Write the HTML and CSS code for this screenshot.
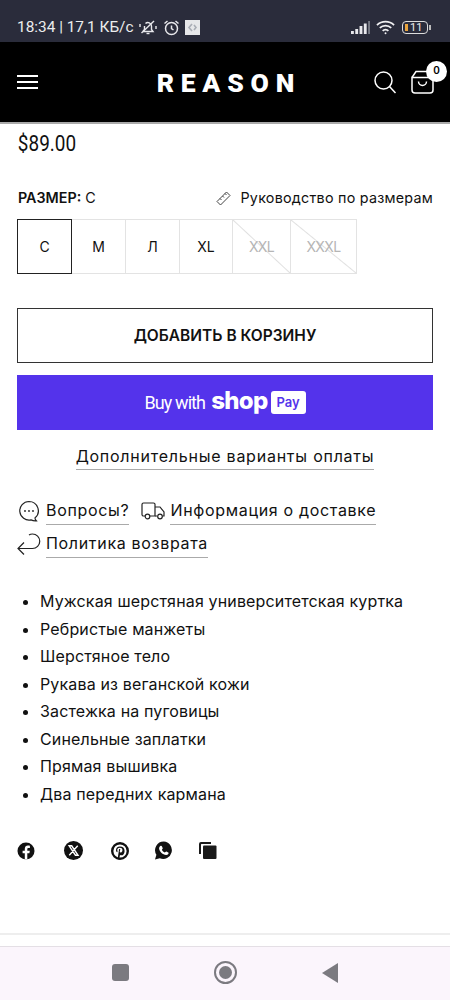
FILE: index.html
```html
<!DOCTYPE html>
<html lang="ru">

<head>
<title>Reason</title>
<meta charset="UTF-8">
<meta name="viewport" content="width=device-width, initial-scale=1.0">
<link rel="stylesheet" href="styles.css">
</head>

<body>
<div class="status-bar">
    <div class="status-left">
        <span>18:34 | 17,1 КБ/с</span>
        <svg class="st-icon" width="18" height="18" viewBox="0 0 18 18" fill="none" stroke="#e8e8ec" stroke-width="1.4"><path d="M4 13.5h10l-1.5-2V8a3.5 3.500 0 0 0-6-2.400"/><path d="M5.500 8v3.500L4 13.500"/><path d="M7.500 15.500h3"/><path d="M2.500 15L15 3"/><path d="M1 6v3M17 8v3"/></svg>
        <svg class="st-icon" width="17" height="17" viewBox="0 0 17 17" fill="none" stroke="#e8e8ec" stroke-width="1.500"><circle cx="8.500" cy="9.500" r="6"/><path d="M8.500 6.500v3l2 1.500"/><path d="M1.500 4.500l3-2.500M15.500 4.500l-3-2.500"/></svg>
        <span class="st-app"><svg width="15" height="15" viewBox="0 0 15 15" fill="none" stroke="#a9adb5" stroke-width="1.600"><path d="M7 4L4 7.500 7 11"/><path d="M9 5l2 2.500L9 10"/></svg></span>
    </div>
    <div class="status-right">
        <svg width="19" height="13" viewBox="0 0 20 13" fill="#e8e8ec" preserveAspectRatio="none"><rect x="0" y="10" width="3" height="3"/><rect x="4.500" y="8" width="3" height="5"/><rect x="9" y="5" width="3" height="8"/><rect x="13.500" y="2.500" width="3" height="10.500"/><rect x="18" y="0" width="2" height="13" fill="#777a85"/></svg>
        <svg width="20" height="15" viewBox="0 0 21 15" fill="none" stroke="#f0f0f2" stroke-width="1.800"><path d="M1 5a13 13 0 0 1 18 0"/><path d="M4 8a8.500 8.500 0 0 1 12 0"/><path d="M7 11a4 4 0 0 1 6 0"/><circle cx="10" cy="13.500" r="1" fill="#f0f0f2" stroke="none"/></svg>
        <div class="battery"><span class="battery-fill"></span><span class="battery-num">11</span></div>
    </div>
</div>

<header class="site-header">
    <div class="burger"><span></span><span></span><span></span></div>
    <div class="logo">REASON</div>
    <div class="header-icons">
        <svg width="24" height="24" viewBox="0 0 24 24" fill="none" stroke="#fff" stroke-width="1.500"><circle cx="10.500" cy="10.500" r="8.500"/><path d="M16.500 16.500l6 6.500"/></svg>
        <div class="cart">
            <svg width="23" height="24" viewBox="0 0 23 24" fill="none" stroke="#fff" stroke-width="1.500"><path d="M1 7.500h21V20a3 3 0 0 1-3 3H4a3 3 0 0 1-3-3z"/><path d="M1 7.500L5 1.500h13l4 6"/><path d="M7.500 11.500a4 4 0 0 0 8 0"/></svg>
            <span class="cart-count">0</span>
        </div>
    </div>
</header>

<main class="product">
    <div class="price">$89.00</div>

    <div class="size-head">
        <div><b>РАЗМЕР:</b> С</div>
        <div class="size-guide">
            <svg width="15" height="15" viewBox="0 0 15 15" fill="none" stroke="#444" stroke-width="1"><path d="M1 10.500L10.500 1 14 4.500 4.500 14z"/><path d="M4 7.500l1.500 1.500M6.500 5l1.500 1.500M9 2.500l1.500 1.500"/></svg>
            <span>Руководство по размерам</span>
        </div>
    </div>

    <div class="sizes">
        <div class="size active">С</div>
        <div class="size">М</div>
        <div class="size">Л</div>
        <div class="size xl">XL</div>
        <div class="size sold xxl">XXL</div>
        <div class="size sold xxxl">XXXL</div>
    </div>

    <button class="add-cart">ДОБАВИТЬ В КОРЗИНУ</button>
    <div class="shop-pay">
        <span class="buy-with">Buy with</span>
        <span class="shop-word">shop</span>
        <span class="pay-tag">Pay</span>
    </div>
    <div class="more-pay"><a>Дополнительные варианты оплаты</a></div>

    <div class="links">
        <div class="link-row">
            <svg class="link-icon" width="22" height="22" viewBox="0 0 22 22" fill="none" stroke="#222" stroke-width="1.200"><path d="M11 1.500a9.300 9.300 0 0 1 6 16.400c0 1 .5 2 1.500 3-2 .2-4-.2-5.500-1a9.300 9.300 0 1 1-2-18.400z"/><circle cx="7" cy="11" r=".9" fill="#222" stroke="none"/><circle cx="11" cy="11" r=".9" fill="#222" stroke="none"/><circle cx="15" cy="11" r=".9" fill="#222" stroke="none"/></svg>
            <a>Вопросы?</a>
            <svg class="link-icon truck" width="24" height="18" viewBox="0 0 24 18" fill="none" stroke="#222" stroke-width="1.200"><path d="M4 14H2.500A1.500 1.500 0 0 1 1 12.500V2.500A1.500 1.500 0 0 1 2.500 1h10A1.500 1.500 0 0 1 14 2.500V14H9"/><path d="M14 5h5l4 5v4h-1.500M16 14h-2"/><circle cx="6.500" cy="14.500" r="2.300"/><circle cx="19" cy="14.500" r="2.300"/></svg>
            <a>Информация о доставке</a>
        </div>
        <div class="link-row">
            <svg class="link-icon back" width="24" height="24" viewBox="0 0 24 24" fill="none" stroke="#222" stroke-width="1.200"><path d="M1 16.500h14.500a6.500 6.500 0 0 0 0-14.500c-1.500 0-2.500.3-3.500 1"/><path d="M7 10.500l-6 6 6 6"/></svg>
            <a>Политика возврата</a>
        </div>
    </div>

    <ul class="features">
        <li>Мужская шерстяная университетская куртка</li>
        <li>Ребристые манжеты</li>
        <li>Шерстяное тело</li>
        <li>Рукава из веганской кожи</li>
        <li>Застежка на пуговицы</li>
        <li>Синельные заплатки</li>
        <li>Прямая вышивка</li>
        <li>Два передних кармана</li>
    </ul>

    <div class="share">
        <svg width="18" height="18" viewBox="0 0 18 18"><circle cx="9" cy="9" r="8.500" fill="#111"/><path d="M10.300 17.500v-6.300h2.100l.4-2.500h-2.500V7.200c0-.8.3-1.300 1.400-1.300h1.200V3.700c-.5-.1-1.200-.2-1.900-.2-2 0-3.200 1.200-3.200 3.300v1.900H5.600v2.500h2.200v6.300z" fill="#fff"/></svg>
        <svg width="19" height="19" viewBox="0 0 18 18"><circle cx="9" cy="9" r="9" fill="#111"/><path d="M4.800 4.500h2.500l6 9h-2.500zM13 4.500L5 13.500" fill="none" stroke="#fff" stroke-width="1.300"/></svg>
        <svg width="18" height="18" viewBox="0 0 18 18"><circle cx="9" cy="9" r="7.800" fill="none" stroke="#111" stroke-width="2.400"/><path d="M9 4.500c-2.600 0-4 1.700-4 3.500 0 1 .5 2 1.300 2.300.3-.6.3-.9.200-1.300-.8-1.600.3-3.200 2.300-3.200 2 0 2.900 1.300 2.600 3-.3 1.700-2.100 2.300-2.700 1.300l.6-3H8.100L6.600 17l1.400.5 1-4.400c2.500 1 4.600-1 4.600-4.200C13.600 6 11.600 4.500 9 4.500z" fill="#111"/></svg>
        <svg width="19" height="19" viewBox="0 0 19 19"><path d="M9.800.5a8.700 8.700 0 0 0-7.400 13.300L1 18.500l4.800-1.300A8.700 8.700 0 1 0 9.800.5z" fill="#111"/><path d="M6.700 4.800c1.200-.5 1.700 1.700 2 2.400.2.500-.8 1.200-.8 1.500.6 1.300 1.600 2.200 2.900 2.800.4 0 1-1 1.500-.9.700.3 2.300 1 2.300 1.500 0 1.300-1.300 2-2.500 1.900-3.500-.4-6.300-3-7-6.200-.2-1.100.6-2.500 1.600-3z" fill="#fff"/></svg>
        <svg width="18" height="17" viewBox="0 0 18 17" fill="#1a1a1a"><path d="M2 0h10v2H2.500a.5.500 0 0 0-.5.500V12H0V2a2 2 0 0 1 2-2z"/><rect x="4" y="3.500" width="13.500" height="13.500" rx="1"/></svg>
    </div>
</main>

<div class="footer-rule"></div>

<nav class="nav-bar">
    <span class="nav-square"></span>
    <span class="nav-circle"><span></span></span>
    <svg width="16" height="20" viewBox="0 0 16 20"><path d="M16 0v20L0 10z" fill="#7b7a80"/></svg>
</nav>
</body>
</html>
```

FILE: styles.css
```css
* {
    box-sizing: border-box;
}
html, body {
    margin: 0;
    height: 1000px;
    overflow: hidden;
}
body {
    display: flex;
    flex-direction: column;
    font-family: Inter, "Noto Sans", sans-serif;
    font-size: 16px;
    color: #111;
    background: #fff;
}
a {
    color: inherit;
    border-bottom: 1px solid #aaa;
}

/* status bar */
.status-bar {
    height: 42px;
    padding: 10px 20px 0 17px;
    display: flex;
    justify-content: space-between;
    background: #2a2c3b;
    color: #eceded;
    font-family: Roboto, sans-serif;
    font-size: 15.400px;
}
.status-left, .status-right {
    display: flex;
    align-items: center;
    height: 34px;
}
.status-left > span:first-child {
    margin-right: 5px;
}
.st-icon {
    margin-right: 6px;
}
.st-app {
    width: 15px;
    height: 15px;
    margin-left: -1px;
    background: #e6e7e9;
    display: block;
    line-height: 0;
}
.status-right {
    gap: 6px;
}
.battery {
    position: relative;
    width: 26px;
    height: 13px;
    border: 1px solid #dcdcdc;
    border-radius: 4px;
    margin-right: 2px;
}
.battery:after {
    content: "";
    position: absolute;
    right: -4px;
    top: 3px;
    width: 2px;
    height: 5px;
    background: #bbb;
}
.battery-fill {
    position: absolute;
    left: 2px;
    top: 2px;
    width: 3px;
    height: 7px;
    background: #e8a33c;
}
.battery-num {
    position: absolute;
    left: 7px;
    top: -1px;
    font-size: 11px;
    line-height: 13px;
}

/* header */
.site-header {
    height: 82px;
    background: #000;
    border-bottom: 2px solid #aaa;
    display: grid;
    grid-template-columns: 1fr auto 1fr;
    align-items: center;
    padding: 0 16px 0 17px;
}
.burger {
    display: flex;
    flex-direction: column;
    gap: 4px;
    width: 21px;
}
.burger span {
    height: 2px;
    background: #fff;
}
.logo {
    color: #fff;
    font-family: Roboto, sans-serif;
    font-weight: 900;
    font-size: 26.500px;
    letter-spacing: 6.800px;
    margin-right: -6.800px;
}
.header-icons {
    justify-self: end;
    display: flex;
    align-items: center;
    gap: 14px;
}
.cart {
    position: relative;
    line-height: 0;
}
.cart-count {
    position: absolute;
    top: -9px;
    right: -13px;
    width: 21px;
    height: 21px;
    border-radius: 50%;
    background: #fff;
    color: #000;
    font-size: 10px;
    font-weight: 600;
    line-height: 19px;
    text-align: center;
}

/* product */
.product {
    flex: 1;
    padding: 0 17px;
}
.price {
    margin-top: 6px;
    font-family: Roboto, sans-serif;
    font-size: 22px;
    line-height: 28px;
    transform: scaleX(.86);
    transform-origin: left;
    padding-left: 1px;
}
.size-head {
    margin-top: 29px;
    display: flex;
    justify-content: space-between;
    align-items: center;
    font-size: 14.300px;
    line-height: 22px;
    padding-left: 1px;
}
.size-head b {
    font-weight: 600;
}
.size-guide {
    display: flex;
    align-items: center;
    gap: 9px;
    letter-spacing: .25px;
}
.sizes {
    margin-top: 10px;
    display: flex;
}
.size {
    width: 55px;
    height: 55px;
    margin-right: -1px;
    border: 1px solid #e3e3e3;
    display: flex;
    align-items: center;
    justify-content: center;
    font-size: 14px;
}
.size.active {
    position: relative;
    z-index: 1;
    border: 1px solid #222;
}
.size.sold {
    color: #b5b5b5;
    letter-spacing: -.6px;
    background: linear-gradient(to bottom left, transparent calc(50% - 1px), #e0e0e0 50%, transparent calc(50% + 1px));
}
.size.xl {
    width: 54px;
}
.size.xxl {
    width: 59px;
}
.size.xxxl {
    width: 67px;
}
.add-cart {
    display: block;
    width: 100%;
    height: 55px;
    margin-top: 34px;
    background: #fff;
    border: 1px solid #333;
    font-family: inherit;
    font-size: 15.500px;
    font-weight: 600;
    color: #111;
}
.shop-pay {
    height: 55px;
    margin-top: 12px;
    background: #5433eb;
    color: #fff;
    display: flex;
    align-items: center;
    justify-content: center;
}
.buy-with {
    font-family: Roboto, sans-serif;
    font-size: 18px;
    letter-spacing: -.9px;
    margin-right: 6px;
}
.shop-word {
    font-family: Inter, sans-serif;
    font-weight: 800;
    font-size: 24px;
    letter-spacing: -.7px;
    line-height: 30px;
    margin-right: 3px;
    margin-top: -4px;
}
.pay-tag {
    width: 35px;
    height: 23px;
    border-radius: 3px;
    background: #fff;
    color: #5433eb;
    font-size: 13px;
    font-weight: 600;
    text-align: center;
    line-height: 23px;
}
.more-pay {
    margin-top: 14px;
    text-align: center;
    font-size: 16px;
    line-height: 24px;
    letter-spacing: .76px;
}
.more-pay a {
    display: inline-block;
    padding-bottom: 1px;
}
.links {
    margin-top: 24px;
    font-size: 16px;
    letter-spacing: .68px;
}
.link-row {
    display: flex;
    align-items: center;
    height: 33px;
    padding-left: 1px;
}
.link-row a {
    line-height: 22px;
    padding-bottom: 3px;
    margin-top: 3px;
}
.link-icon {
    margin-right: 6px;
}
.truck {
    margin-left: 12px;
    margin-right: 5px;
}
.back {
    margin-left: -1px;
    margin-right: 5px;
}
.features {
    margin: 28px 0 0;
    padding: 0 0 0 23px;
    font-size: 16px;
    line-height: 27.500px;
    letter-spacing: .15px;
}
.share {
    margin-top: 33px;
    display: flex;
    align-items: center;
}
.share svg {
    margin-right: 28px;
}
.share svg:nth-child(1) {
    margin-right: 29px;
}
.share svg:nth-child(3) {
    margin-right: 25px;
}
.share svg:nth-child(4) {
    margin-right: 26px;
}
.footer-rule {
    height: 2px;
    background: #eee;
    margin-bottom: 11px;
}

/* android nav */
.nav-bar {
    height: 54px;
    background: #fbf5fc;
    border-top: 1px solid #e4dfe5;
    display: flex;
    align-items: center;
    justify-content: center;
    padding-bottom: 2px;
}
.nav-square {
    width: 17px;
    height: 17px;
    background: #7b7a80;
    border-radius: 3px;
    margin-right: 85px;
}
.nav-circle {
    width: 23px;
    height: 23px;
    border: 2px solid #7b7a80;
    border-radius: 50%;
    display: flex;
    align-items: center;
    justify-content: center;
    margin-right: 85px;
}
.nav-circle span {
    width: 13px;
    height: 13px;
    border-radius: 50%;
    background: #7b7a80;
}
```
